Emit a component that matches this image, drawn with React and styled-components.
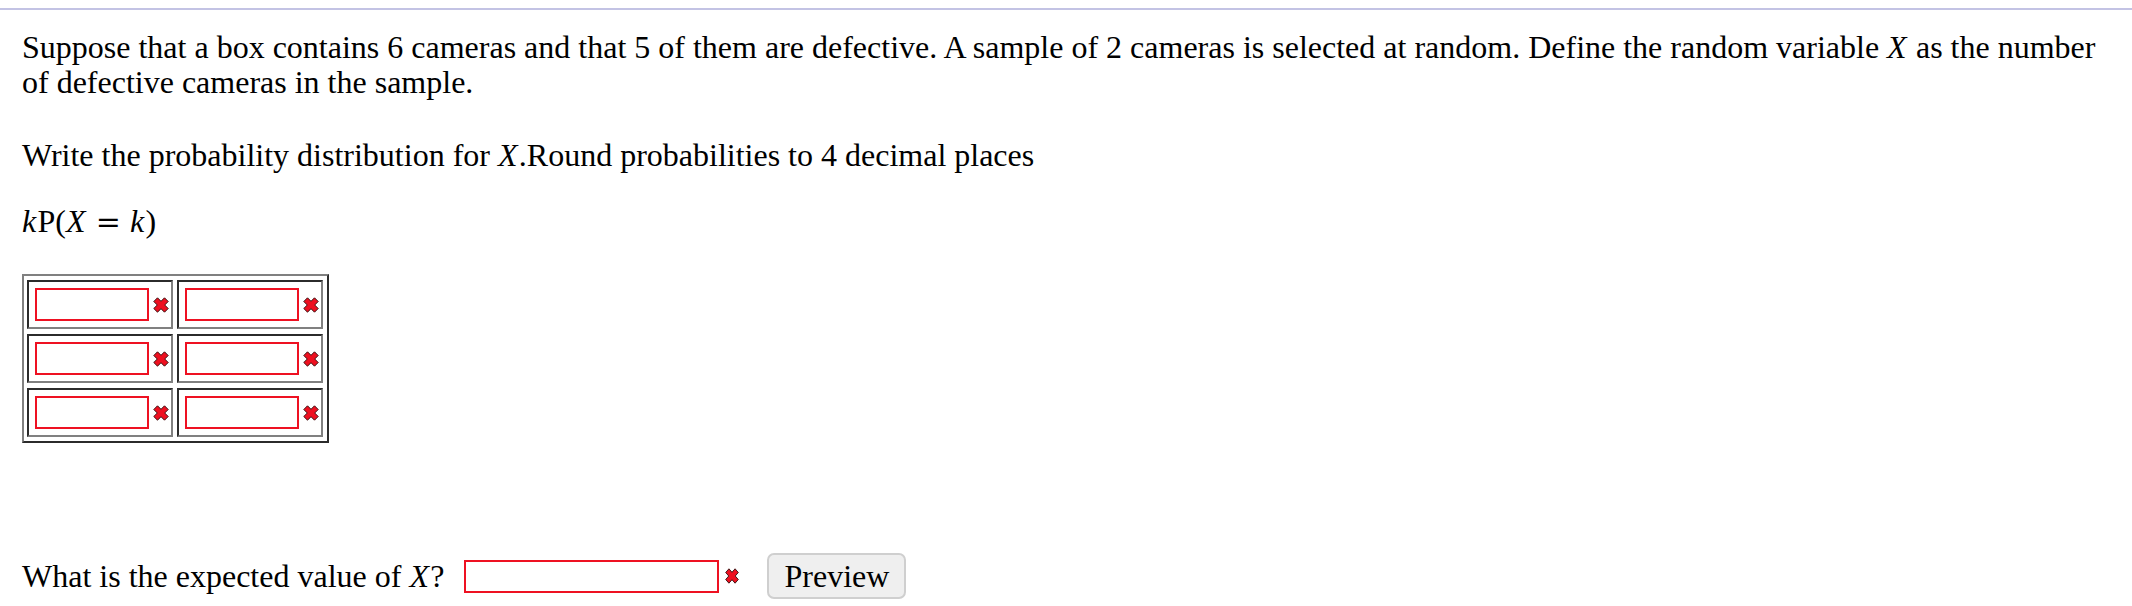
import styled, { createGlobalStyle } from 'styled-components'

const GlobalStyle = createGlobalStyle`
    body {
        margin: 0;
        background: #fff;
        font-family: "Liberation Serif", "Times New Roman", serif;
        color: #000;
    }
`

const Page = styled.div`
    padding-top: 8px;
`

const Rule = styled.div`
    border-top: 2px solid #c3c3e4;
`

const Content = styled.div`
    padding: 0 22px;
    font-size: 32px;
    line-height: 35px;
`

const Para = styled.p`
    margin: ${(p) => p.$top}px 0 0 0;
`

const MathVar = styled.i`
    font-family: "Liberation Serif", "Times New Roman", serif;
    font-style: italic;
    letter-spacing: 0.04em;
`

const Equals = styled.span`
    font-family: "DejaVu Serif", serif;
    font-size: 30px;
    line-height: 1;
    padding: 0 0.3em;
`

const Grid = styled.div`
    display: grid;
    width: fit-content;
    grid-template-columns: 146px 146px;
    grid-auto-rows: 49px;
    gap: 5px 4px;
    padding: 4px 4px 4px 3px;
    margin-top: 35px;
    border: 2px solid;
    border-color: #808080 #2b2b2b #2b2b2b #808080;
`

const Cell = styled.div`
    display: flex;
    align-items: center;
    gap: 4px;
    padding: 0 2px 0 6px;
    border: 2px solid;
    border-color: #2b2b2b #808080 #808080 #2b2b2b;
`

const AnswerInput = styled.input`
    box-sizing: border-box;
    width: ${(p) => p.$w}px;
    height: 33px;
    margin: 0;
    padding: 0 4px;
    border: 2px solid #ee1122;
    font-size: 22px;
    font-family: inherit;
    outline: none;
`

const QuestionRow = styled.div`
    display: flex;
    align-items: center;
    margin-top: 110px;
`

const Label = styled.span`
    margin-right: 20px;
`

const Preview = styled.button`
    box-sizing: border-box;
    width: 139px;
    height: 46px;
    margin-left: 28px;
    background: #efefef;
    border: 2px solid #cfcfcf;
    border-radius: 7px;
    font-family: "Liberation Serif", "Times New Roman", serif;
    font-size: 32px;
    color: #000;
    padding: 0;
`

const CrossIcon = ({ w = 16, h = 16, style }) => (
    <svg width={w} height={h} viewBox="0 0 16 16" preserveAspectRatio="none" style={style}>
        <path
            d="M4.5 0.8 L8 4.3 L11.5 0.8 L15.2 4.5 L11.7 8 L15.2 11.5 L11.5 15.2 L8 11.7 L4.5 15.2 L0.8 11.5 L4.3 8 L0.8 4.5 Z"
            fill="#ee1020"
            stroke="#3a1212"
            strokeWidth="1"
            strokeLinejoin="round"
        />
    </svg>
)

const App = () => {
    const cells = [0, 1, 2, 3, 4, 5]

    return (
        <Page>
            <GlobalStyle />
            <Rule />
            <Content>
                <Para $top={20}>
                    Suppose that a box contains 6 cameras and that 5 of them are defective. A sample of 2 cameras is
                    selected at random. Define the random variable <MathVar>X</MathVar> as the number of defective
                    cameras in the sample.
                </Para>
                <Para $top={38}>
                    Write the probability distribution for <MathVar>X</MathVar>.Round probabilities to 4 decimal places
                </Para>
                <Para $top={31}>
                    <MathVar>k</MathVar>P(<MathVar>X</MathVar>
                    <Equals>=</Equals>
                    <MathVar>k</MathVar>)
                </Para>
                <Grid>
                    {cells.map((c) => (
                        <Cell key={c}>
                            <AnswerInput $w={114} type="text" />
                            <CrossIcon />
                        </Cell>
                    ))}
                </Grid>
                <QuestionRow>
                    <Label>
                        What is the expected value of <MathVar>X</MathVar>?
                    </Label>
                    <AnswerInput $w={255} type="text" />
                    <CrossIcon w={14} h={16} style={{ marginLeft: 6 }} />
                    <Preview>Preview</Preview>
                </QuestionRow>
            </Content>
        </Page>
    )
}

export default App
